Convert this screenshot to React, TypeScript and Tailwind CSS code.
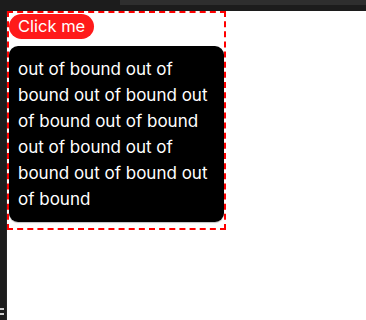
export default function App() {
  return (
    <div className="w-[366px] h-[320px] bg-white overflow-hidden flex flex-col" style={{ fontFamily: 'Inter, "Noto Sans", sans-serif' }}>
      <div className="h-[11px] shrink-0 bg-[#1c1c1c] flex items-start">
        <div className="ml-[120px] flex-1 h-[5px] bg-[#2e2e2e]" />
      </div>
      <div className="flex-1 flex">
        <div className="w-[7px] shrink-0 bg-[#1c1c1c] flex flex-col justify-end items-start gap-[3px] pb-[5px] border-r border-[#262626]">
          <div className="w-[4px] h-[2px] bg-[#cccccc]" />
          <div className="w-[4px] h-[2px] bg-[#cccccc]" />
        </div>
        <div className="flex-1 flex items-start">
          <div className="w-[219px] h-[219px] border-2 border-dashed border-[#ff0000] flex flex-col items-start gap-[7px] pt-px">
            <button className="h-[25px] px-[9px] rounded-full bg-[#ff1a1a] text-white text-[16.5px] leading-[25px]">Click me</button>
            <div className="w-[215px] bg-black text-white text-[17px] leading-[26px] rounded-[9px] px-[9px] py-[10px] shadow-[0_1px_1px_rgba(0,0,0,0.25)]">
              out of bound out of bound out of bound out of bound out of bound out of bound out of bound out of bound out of bound
            </div>
          </div>
        </div>
      </div>
    </div>
  );
}
